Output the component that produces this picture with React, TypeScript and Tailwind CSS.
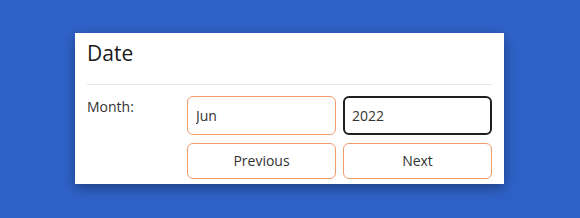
import React from "react";

export default function App() {
  return (
    <div
      className="w-[580px] h-[218px] bg-[#2f62c8] pt-[33px] pl-[75px]"
      style={{ fontFamily: '"Open Sans", "Noto Sans", sans-serif' }}
    >
      <div className="w-[429px] h-[151px] bg-white px-3 shadow-[0_4px_12px_rgba(0,0,0,0.35)]">
        <div className="h-[52px] border-b border-[#e6e6e6] pt-[10px]">
          <h1 className="text-[21px] text-[#1a1a1a] leading-none">Date</h1>
        </div>
        <div className="flex pt-[11px]">
          <div className="w-[100px] text-sm text-[#333333] pt-[1px]">Month:</div>
          <div className="grid grid-cols-[149px_149px] gap-x-[7px] gap-y-2">
            <input
              className="h-[39px] rounded-md border border-[#f19a6b] px-2 text-sm text-[#333333] outline-none"
              defaultValue="Jun"
            />
            <input
              className="h-[39px] rounded-md border-2 border-[#1f1f1f] px-[7px] text-sm text-[#333333] outline-none"
              defaultValue="2022"
            />
            <button className="h-[36px] rounded-md border border-[#f19a6b] text-sm text-[#333333] bg-white">
              Previous
            </button>
            <button className="h-[36px] rounded-md border border-[#f19a6b] text-sm text-[#333333] bg-white">
              Next
            </button>
          </div>
        </div>
      </div>
    </div>
  );
}
